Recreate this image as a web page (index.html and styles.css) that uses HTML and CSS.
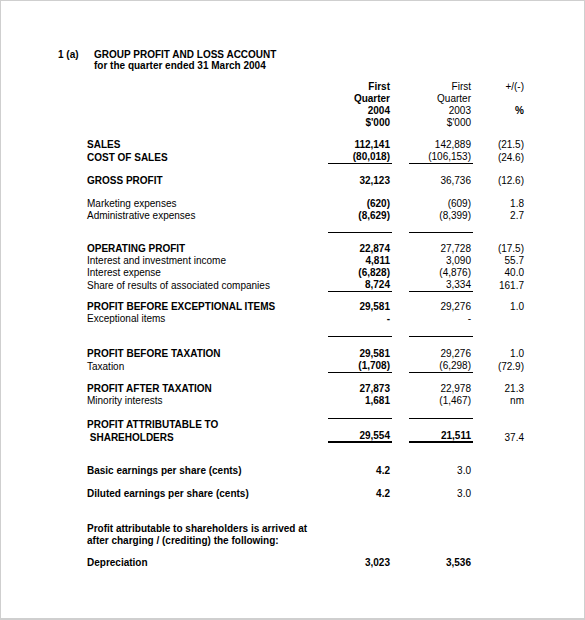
FILE: index.html
```html
<!DOCTYPE html>
<html lang="en">
<head>
  <meta charset="UTF-8">
  <title>Group Profit and Loss Account</title>
  <link rel="stylesheet" href="styles.css">
</head>
<body>

<div class="sheet">
  <div class="title">
    <div class="num">1 (a)</div>
    <div>GROUP PROFIT AND LOSS ACCOUNT<br>for the quarter ended 31 March 2004</div>
  </div>

  <table class="pl">
    <colgroup>
      <col class="c-label">
      <col class="c-val">
      <col class="c-gap">
      <col class="c-val">
      <col class="c-pct">
    </colgroup>
    <tr class="head">
      <td></td>
      <td class="v b">First<br>Quarter<br>2004<br>$'000</td>
      <td></td>
      <td class="v">First<br>Quarter<br>2003<br>$'000</td>
      <td class="p">+/(-)<br><br><b>%</b></td>
    </tr>

    <tr class="sp10">
      <td class="b">SALES</td><td class="v b">112,141</td><td></td><td class="v">142,889</td><td class="p">(21.5)</td>
    </tr>
    <tr class="line">
      <td class="b">COST OF SALES</td><td class="v b">(80,018)</td><td></td><td class="v">(106,153)</td><td class="p">(24.6)</td>
    </tr>

    <tr class="sp11">
      <td class="b">GROSS PROFIT</td><td class="v b">32,123</td><td></td><td class="v">36,736</td><td class="p">(12.6)</td>
    </tr>

    <tr class="sp11">
      <td>Marketing expenses</td><td class="v b">(620)</td><td></td><td class="v">(609)</td><td class="p">1.8</td>
    </tr>
    <tr>
      <td>Administrative expenses</td><td class="v b">(8,629)</td><td></td><td class="v">(8,399)</td><td class="p">2.7</td>
    </tr>
    <tr class="line rule r10">
      <td></td><td></td><td></td><td></td><td></td>
    </tr>

    <tr class="sp10">
      <td class="b">OPERATING PROFIT</td><td class="v b">22,874</td><td></td><td class="v">27,728</td><td class="p">(17.5)</td>
    </tr>
    <tr>
      <td>Interest and investment income</td><td class="v b">4,811</td><td></td><td class="v">3,090</td><td class="p">55.7</td>
    </tr>
    <tr>
      <td>Interest expense</td><td class="v b">(6,828)</td><td></td><td class="v">(4,876)</td><td class="p">40.0</td>
    </tr>
    <tr class="line">
      <td>Share of results of associated companies</td><td class="v b">8,724</td><td></td><td class="v">3,334</td><td class="p">161.7</td>
    </tr>

    <tr class="sp9">
      <td class="b">PROFIT BEFORE EXCEPTIONAL ITEMS</td><td class="v b">29,581</td><td></td><td class="v">29,276</td><td class="p">1.0</td>
    </tr>
    <tr>
      <td>Exceptional items</td><td class="v b">-</td><td></td><td class="v">-</td><td class="p"></td>
    </tr>
    <tr class="line rule r11">
      <td></td><td></td><td></td><td></td><td></td>
    </tr>

    <tr class="sp11">
      <td class="b">PROFIT BEFORE TAXATION</td><td class="v b">29,581</td><td></td><td class="v">29,276</td><td class="p">1.0</td>
    </tr>
    <tr class="line">
      <td>Taxation</td><td class="v b">(1,708)</td><td></td><td class="v">(6,298)</td><td class="p">(72.9)</td>
    </tr>

    <tr class="sp10">
      <td class="b">PROFIT AFTER TAXATION</td><td class="v b">27,873</td><td></td><td class="v">22,978</td><td class="p">21.3</td>
    </tr>
    <tr>
      <td>Minority interests</td><td class="v b">1,681</td><td></td><td class="v">(1,467)</td><td class="p">nm</td>
    </tr>
    <tr class="line rule r11">
      <td></td><td></td><td></td><td></td><td></td>
    </tr>

    <tr class="tight">
      <td class="b">PROFIT ATTRIBUTABLE TO</td><td></td><td></td><td></td><td></td>
    </tr>
    <tr class="tight total">
      <td class="b">&nbsp;SHAREHOLDERS</td><td class="v b">29,554</td><td></td><td class="v b">21,511</td><td class="p">37.4</td>
    </tr>

    <tr class="sp22">
      <td class="b">Basic earnings per share (cents)</td><td class="v b">4.2</td><td></td><td class="v">3.0</td><td></td>
    </tr>
    <tr class="sp11">
      <td class="b">Diluted earnings per share (cents)</td><td class="v b">4.2</td><td></td><td class="v">3.0</td><td></td>
    </tr>

    <tr class="sp23">
      <td class="b" colspan="5">Profit attributable to shareholders is arrived at<br>after charging / (crediting) the following:</td>
    </tr>
    <tr class="sp10">
      <td class="b">Depreciation</td><td class="v b">3,023</td><td></td><td class="v b">3,536</td><td></td>
    </tr>
  </table>
</div>

</body>
</html>
```

FILE: styles.css
```css
body {
  margin: 0;
  padding: 0;
  background: #fff;
  font-family: "Liberation Sans", Arial, sans-serif;
  font-size: 10px;
  color: #000;
}

.sheet {
  box-sizing: border-box;
  width: 585px;
  height: 620px;
  border: 1px solid #cfcfcf;
  border-bottom: 2px solid #cfcfcf;
  padding: 48px 0 0 57px;
}

.title {
  display: flex;
  font-weight: bold;
  line-height: 11px;
}

.title .num {
  width: 36px;
}

.pl {
  margin: 10px 0 0 29px;
  table-layout: fixed;
  border-collapse: separate;
  border-spacing: 0;
  width: 439px;
  line-height: 12px;
}

.c-label { width: 241px; }
.c-val { width: 64px; }
.c-gap { width: 17px; }
.c-pct { width: 53px; }

.pl td {
  padding: 0;
  vertical-align: bottom;
  white-space: nowrap;
}

.pl .head td {
  vertical-align: top;
}

.pl td.v {
  text-align: right;
  padding-right: 2px;
}

.pl td.p {
  text-align: right;
  padding-right: 2px;
}

.b {
  font-weight: bold;
}

/* spacing above a group */
.sp9 td { padding-top: 9px; }
.sp10 td { padding-top: 10px; }
.sp11 td { padding-top: 11px; }
.sp22 td { padding-top: 22px; }
.sp23 td { padding-top: 23px; }

/* underlines under the two money columns */
.line td:nth-child(2),
.line td:nth-child(4) {
  border-bottom: 1px solid #000;
}

.rule td { padding: 0; }
.r10 td { height: 10px; }
.r11 td { height: 11px; }

.tight td { line-height: 11px; }

.total td:nth-child(2),
.total td:nth-child(4) {
  border-bottom: 2px solid #000;
}
```
